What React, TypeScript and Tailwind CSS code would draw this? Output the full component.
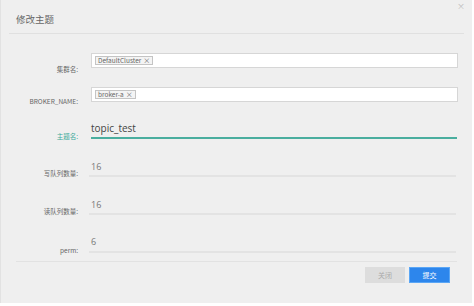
import React from "react";

const FONT = { fontFamily: '"Noto Sans CJK SC", "Noto Sans", sans-serif' };

function Tag({ text }: { text: string }) {
  return (
    <span className="ml-[3px] flex h-[9px] items-center gap-[2px] border border-[#c4c4c4] bg-[#f4f4f4] px-[2px] text-[6.5px] leading-none text-[#666]">
      {text}
      <span className="text-[7px] text-[#666]">×</span>
    </span>
  );
}

function Label({ text, pt, color = "text-[#666]" }: { text: string; pt: string; color?: string }) {
  return (
    <div className={`w-[77px] shrink-0 text-right text-[6.5px] leading-[8px] ${pt} ${color}`}>{text}:</div>
  );
}

export default function App() {
  return (
    <div className="h-[306px] w-[474px] bg-white" style={FONT}>
      <div className="relative flex h-[303px] w-[472px] flex-col border-l border-[#e2e2e2] bg-[#efefef]">
        {/* close */}
        <span className="absolute right-[7px] top-[2px] text-[8px] leading-none text-[#bbb]">×</span>

        {/* header */}
        <div className="mx-[8px] flex h-[34px] items-center border-b border-[#e0e0e0] px-[7px] pt-[6px]">
          <span className="text-[9.5px] text-[#666]">修改主题</span>
        </div>

        {/* 集群名 */}
        <div className="mt-[19px] flex h-[15px] pr-[14px]">
          <Label text="集群名" pt="pt-[12px]" />
          <div className="ml-[13px] flex flex-1 items-center border border-[#d6d6d6] bg-white">
            <Tag text="DefaultCluster" />
          </div>
        </div>

        {/* BROKER_NAME */}
        <div className="mt-[19px] flex h-[15px] pr-[14px]">
          <Label text="BROKER_NAME" pt="pt-[10px]" />
          <div className="ml-[13px] flex flex-1 items-center border border-[#d6d6d6] bg-white">
            <Tag text="broker-a" />
          </div>
        </div>

        {/* 主题名 */}
        <div className="mt-[21px] flex h-[16px] pr-[15px]">
          <Label text="主题名" pt="pt-[9px]" color="text-[#3aa99a]" />
          <div
            className="ml-[13px] flex flex-1 items-center border-b-2 border-[#4aae9f] pb-[3px] text-[10px] text-[#444]"
            style={{ fontFamily: '"Open Sans", sans-serif' }}
          >
            topic_test
          </div>
        </div>

        {/* 写队列数量 */}
        <div className="mt-[22px] flex h-[16px] pr-[16px]">
          <Label text="写队列数量" pt="pt-[8px]" />
          <div
            className="ml-[11px] flex flex-1 items-center border-b-2 border-[#e3e3e3] pb-[3px] pl-[2px] text-[9px] text-[#777]"
            style={{ fontFamily: '"Open Sans", sans-serif' }}
          >
            16
          </div>
        </div>

        {/* 读队列数量 */}
        <div className="mt-[22px] flex h-[16px] pr-[16px]">
          <Label text="读队列数量" pt="pt-[8px]" />
          <div
            className="ml-[11px] flex flex-1 items-center border-b-2 border-[#e3e3e3] pb-[3px] pl-[2px] text-[9px] text-[#777]"
            style={{ fontFamily: '"Open Sans", sans-serif' }}
          >
            16
          </div>
        </div>

        {/* perm */}
        <div className="mt-[21px] flex h-[17px] pr-[16px]">
          <Label text="perm" pt="pt-[10px]" />
          <div
            className="ml-[11px] flex flex-1 items-center border-b-2 border-[#e3e3e3] pb-[4px] pl-[2px] text-[9px] text-[#777]"
            style={{ fontFamily: '"Open Sans", sans-serif' }}
          >
            6
          </div>
        </div>

        {/* footer */}
        <div className="mx-[15px] mt-[8px] border-t border-[#e2e2e2]" />
        <div className="mt-[5px] flex justify-end gap-[4px] pr-[22px]">
          <button className="flex h-[16px] w-[40px] items-center justify-center bg-[#dddddd] text-[7px] text-[#aaa]">
            关闭
          </button>
          <button className="flex h-[16px] w-[41px] items-center justify-center border border-[#5aa6f5] bg-[#2d86ec] text-[7px] text-white">
            提交
          </button>
        </div>
      </div>
    </div>
  );
}
